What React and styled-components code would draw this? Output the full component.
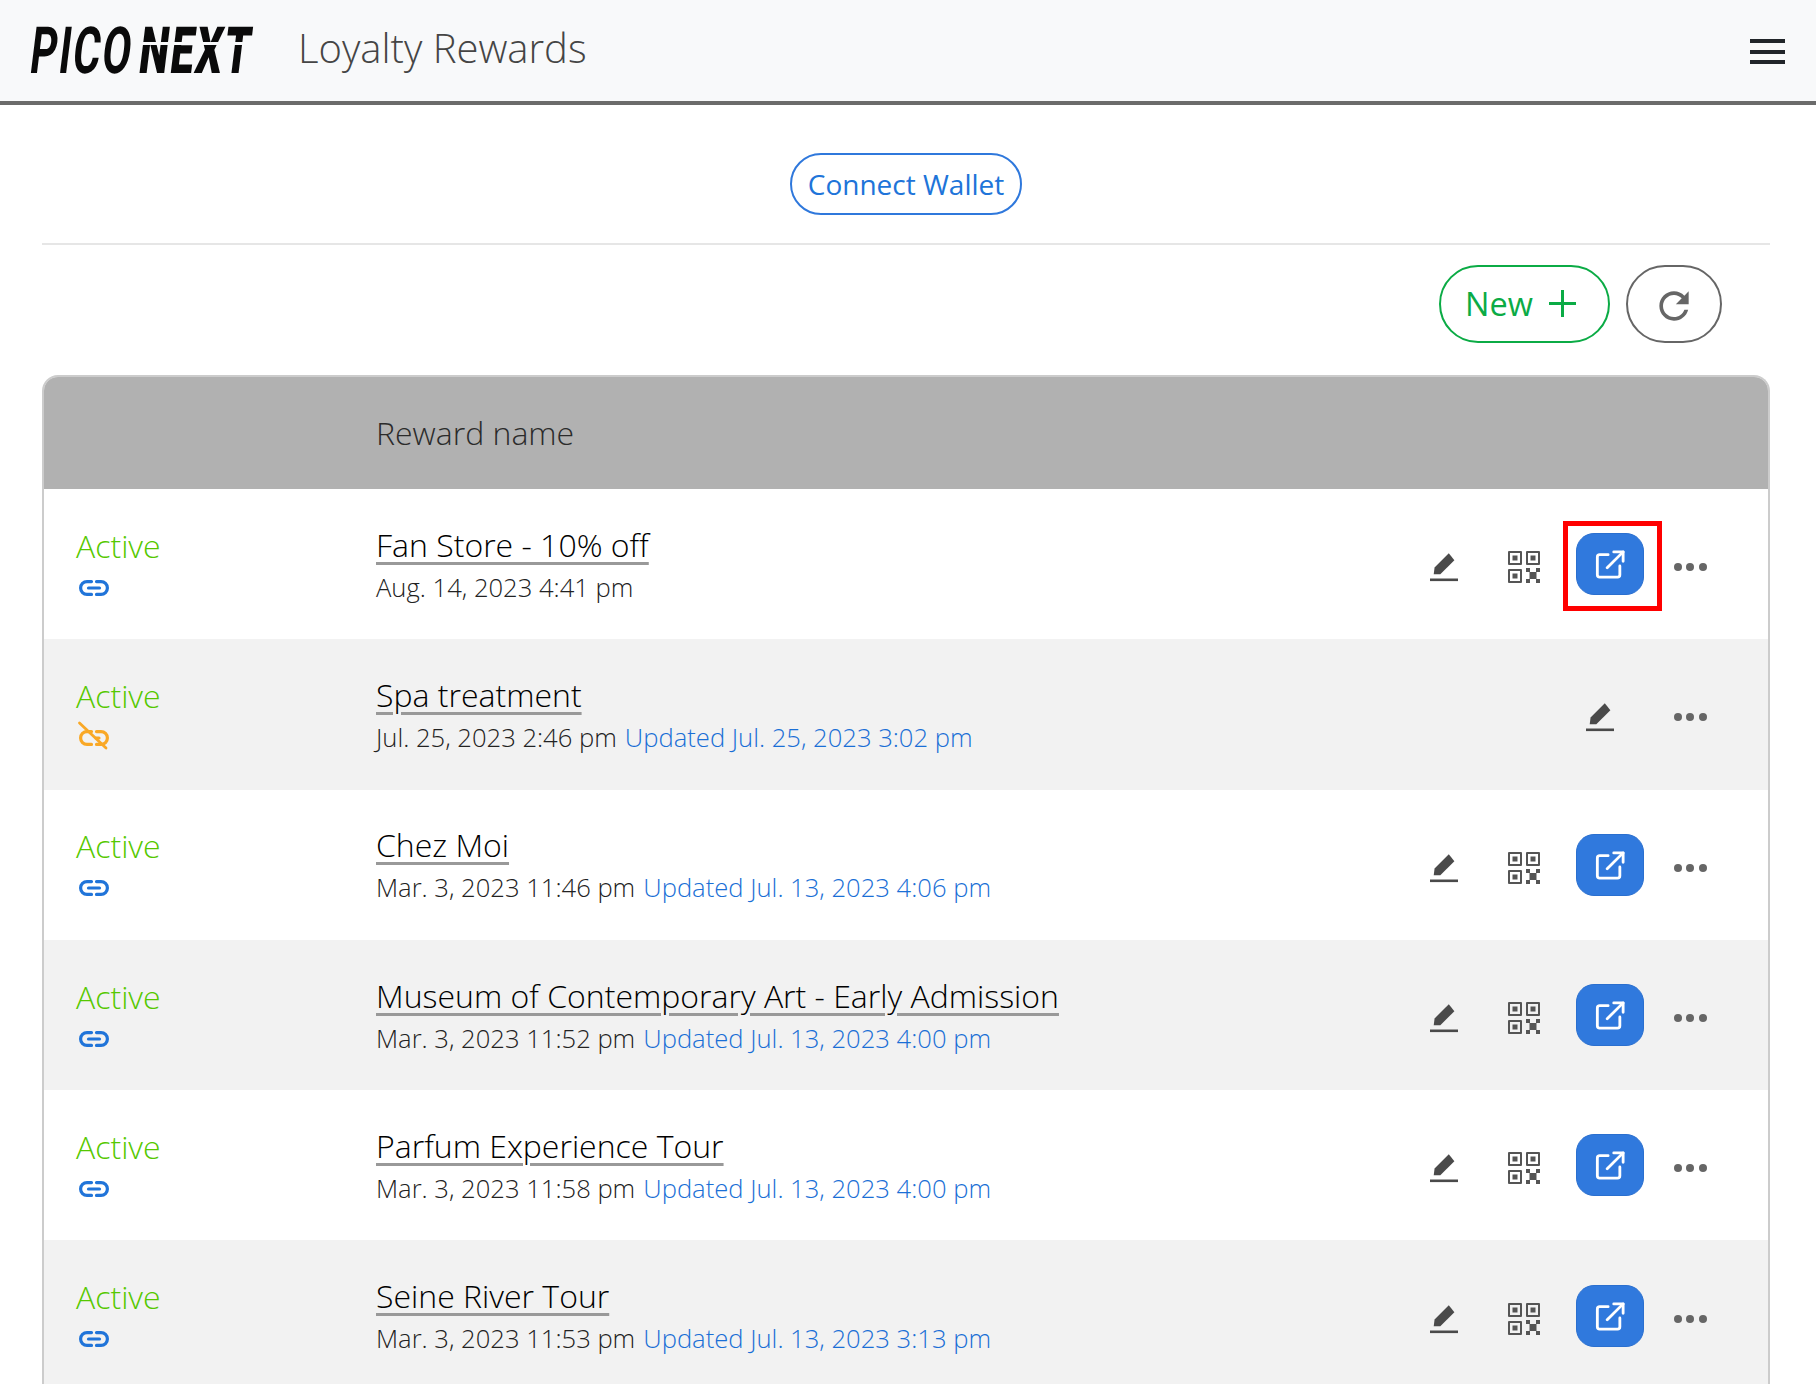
import styled, { createGlobalStyle } from 'styled-components';

const GlobalStyle = createGlobalStyle`
  html, body {
    margin: 0;
    padding: 0;
    background: #fff;
    font-family: "Open Sans", "Liberation Sans", sans-serif;
  }
  #root {
    height: 1384px;
    overflow: hidden;
  }
`;

const Header = styled.header`
  height: 101px;
  box-sizing: content-box;
  border-bottom: 4px solid #6b6b6b;
  background: #f8f9fa;
  display: flex;
  align-items: center;
  padding: 0 31px 0 31px;
`;

const LogoBox = styled.div`
  width: 267px;
  flex: none;
  height: 60px;
  overflow: visible;
`;

const Logo = styled.div`
  display: inline-block;
  font-family: "Roboto", sans-serif;
  font-weight: 700;
  font-size: 65px;
  line-height: 60px;
  letter-spacing: 3px;
  color: #0a0a0a;
  white-space: nowrap;
  transform-origin: left center;
  transform: skewX(-7deg) scaleX(0.64);
`;

const LogoNext = styled.span`
  position: relative;
  margin-left: 10px;
  font-weight: 900;
  &::after {
    content: "";
    position: absolute;
    left: -4px;
    right: -4px;
    top: 29px;
    height: 3px;
    background: #f8f9fa;
  }
`;

const AppTitle = styled.div`
  flex: 1;
  font-size: 40px;
  font-weight: 300;
  color: #454545;
  margin-top: -7px;
`;

const Burger = styled.button`
  width: 35px;
  height: 25px;
  padding: 0;
  border: 0;
  background: none;
  display: flex;
  flex-direction: column;
  justify-content: space-between;
  margin-top: 2px;
  i {
    display: block;
    height: 4px;
    background: #212529;
  }
`;

const Main = styled.main`
  padding: 0 46px 0 42px;
`;

const WalletBar = styled.div`
  display: flex;
  justify-content: center;
  padding: 48px 0 28px;
  border-bottom: 2px solid #e6e6e6;
`;

const WalletButton = styled.button`
  width: 232px;
  height: 62px;
  border: 2px solid #2f78dc;
  border-radius: 31px;
  background: #fff;
  color: #2074d9;
  font: 400 28px "Open Sans", sans-serif;
  padding: 0;
`;

const Toolbar = styled.div`
  display: flex;
  justify-content: flex-end;
  gap: 16px;
  padding: 20px 48px 32px 0;
`;

const PillButton = styled.button`
  height: 78px;
  box-sizing: border-box;
  border: 2px solid ${p => p.$color};
  border-radius: 39px;
  background: #fff;
  color: ${p => p.$color};
  width: ${p => p.$width}px;
  font: 400 32.5px "Open Sans", sans-serif;
  display: flex;
  align-items: center;
  justify-content: center;
  gap: 16px;
  padding: 0 ${p => p.$shift || 0}px 2px 0;
`;

const RefreshGlyph = styled.svg`
  margin-top: 6px;
`;

const Table = styled.section`
  border: solid #ccc;
  border-width: 2px 2px 0;
  border-radius: 16px 16px 0 0;
  overflow: hidden;
`;

const HeadRow = styled.div`
  height: 112px;
  box-sizing: border-box;
  padding: 0 0 2px 332px;
  background: #b1b1b1;
  display: flex;
  align-items: center;
  font-size: 32px;
  font-weight: 300;
  color: #2b2b2b;
`;

const Row = styled.div`
  height: 150.3px;
  box-sizing: border-box;
  display: flex;
  align-items: center;
  background: ${p => (p.$alt ? '#f2f2f2' : '#fff')};
  padding-right: 32px;
`;

const StatusCol = styled.div`
  width: 332px;
  flex: none;
  padding: 0 0 7px 32px;
  box-sizing: border-box;
`;

const StatusText = styled.div`
  font-size: 32px;
  line-height: 40px;
  font-weight: 300;
  color: #56c800;
`;

const LinkIcon = styled.svg`
  display: block;
  margin: 14px 0 0 3px;
  color: ${p => p.$color};
  overflow: visible;
`;

const NameCol = styled.div`
  flex: 1;
  min-width: 0;
  padding-top: 5px;
`;

const RewardName = styled.a`
  display: inline-block;
  font-size: 32px;
  line-height: 40px;
  font-weight: 300;
  color: #000;
  text-decoration: underline;
  text-decoration-color: #999;
  text-decoration-thickness: 2.5px;
  text-underline-offset: 5px;
`;

const Dates = styled.div`
  margin-top: 2px;
  font-size: 25.6px;
  line-height: 42px;
  font-weight: 300;
  color: #222;
  span {
    color: #1a6fd6;
    margin-left: 8px;
  }
`;

const Actions = styled.div`
  display: flex;
  align-items: center;
  flex: none;
`;

const EditSlot = styled.div`
  width: 88px;
  padding-top: 6px;
  display: flex;
  justify-content: center;
  color: #4a4a4a;
`;

const QrSlot = styled.div`
  width: 72px;
  margin-right: 16px;
  padding-top: 6px;
  display: flex;
  justify-content: center;
  color: #555;
`;

const OpenButton = styled.button`
  width: 68px;
  height: 62px;
  border-radius: 18px;
  border: 1px solid #2a6fcf;
  background: #3079dd;
  color: #fff;
  padding: 2px 0 0;
  display: flex;
  align-items: center;
  justify-content: center;
  position: relative;
`;

const Highlight = styled.div`
  position: absolute;
  left: -14px;
  top: -13px;
  width: 99px;
  height: 90px;
  box-sizing: border-box;
  border: 5px solid #f00;
  pointer-events: none;
`;

const MoreSlot = styled.div`
  width: 92px;
  padding-top: 6px;
  display: flex;
  justify-content: center;
  gap: 4.5px;
  i {
    width: 8px;
    height: 8px;
    border-radius: 50%;
    background: #666;
  }
`;

const EditIcon = () => (
  <svg width="30" height="30" viewBox="0 0 30 30" fill="currentColor">
    <path d="M18.6 3 4.4 17.2 3.5 24h6.6L24.2 10z" transform="translate(1.2 -1.8)" />
    <rect x="1" y="26.5" width="28" height="2.6" />
  </svg>
);

const QrIcon = () => (
  <svg width="32" height="32" viewBox="0 0 32 32" fill="currentColor">
    <path fillRule="evenodd" d="M1 0h12a1 1 0 0 1 1 1v12a1 1 0 0 1-1 1H1a1 1 0 0 1-1-1V1a1 1 0 0 1 1-1zm1 2v10h10V2z" />
    <rect x="4.5" y="4.5" width="5" height="5" />
    <path fillRule="evenodd" d="M19 0h12a1 1 0 0 1 1 1v12a1 1 0 0 1-1 1H19a1 1 0 0 1-1-1V1a1 1 0 0 1 1-1zm1 2v10h10V2z" />
    <rect x="22.5" y="4.5" width="5" height="5" />
    <path fillRule="evenodd" d="M1 18h12a1 1 0 0 1 1 1v12a1 1 0 0 1-1 1H1a1 1 0 0 1-1-1V19a1 1 0 0 1 1-1zm1 2v10h10V20z" />
    <rect x="4.5" y="22.5" width="5" height="5" />
    <rect x="18" y="17" width="4" height="4" />
    <rect x="28" y="17" width="4" height="4" />
    <rect x="21.5" y="21" width="7" height="7" />
    <rect x="18" y="28" width="4" height="4" />
    <rect x="28" y="28" width="4" height="4" />
  </svg>
);

const OpenIcon = () => (
  <svg width="30" height="30" viewBox="0 0 32 32" fill="none" stroke="currentColor" strokeWidth="3" strokeLinecap="round" strokeLinejoin="round">
    <path d="M14 6H5a2.5 2.5 0 0 0-2.5 2.5v19A2.5 2.5 0 0 0 5 30h19a2.5 2.5 0 0 0 2.5-2.5V18" transform="translate(0 -1)" />
    <path d="M13 19 30 2" />
    <path d="M20 2h10v10" />
  </svg>
);

const RefreshIcon = () => (
  <RefreshGlyph width="44" height="44" viewBox="0 0 24 24" fill="#666">
    <path d="M17.65 6.35C16.2 4.9 14.21 4 12 4c-4.42 0-7.99 3.58-7.99 8s3.57 8 7.99 8c3.73 0 6.84-2.55 7.73-6h-2.08c-.82 2.33-3.04 4-5.65 4-3.31 0-6-2.69-6-6s2.69-6 6-6c1.66 0 3.14.69 4.22 1.78L13 11h7V4l-2.35 2.35z" />
  </RefreshGlyph>
);

const PlusIcon = () => (
  <svg width="27" height="27" viewBox="0 0 27 27" stroke="#0bab45" strokeWidth="3">
    <path d="M13.5 0v27M0 13.5h27" />
  </svg>
);

// chain icon, the off version gets a slash and a gap in the middle bar
const ChainIcon = ({ off }) => (
  <LinkIcon $color={off ? '#f9a826' : '#2074d9'} width="30" height="16" viewBox="0 0 30 16" fill="none" stroke="currentColor" strokeWidth="3.2" strokeLinecap="round">
    <path d="M12.5 1.6H8a6.4 6.4 0 0 0 0 12.8h4.5" />
    <path d="M17.5 1.6H22a6.4 6.4 0 0 1 0 12.8h-4.5" />
    {off ? <path d="M17 8h3" /> : <path d="M9.5 8h11" />}
    {off && <path d="M0.5 -7 27 18" strokeWidth="2.8" />}
  </LinkIcon>
);

const rewards = [
  { name: 'Fan Store - 10% off', created: 'Aug. 14, 2023 4:41 pm', highlight: true },
  { name: 'Spa treatment', created: 'Jul. 25, 2023 2:46 pm', updated: 'Updated Jul. 25, 2023 3:02 pm', inactive: true },
  { name: 'Chez Moi', created: 'Mar. 3, 2023 11:46 pm', updated: 'Updated Jul. 13, 2023 4:06 pm' },
  { name: 'Museum of Contemporary Art - Early Admission', created: 'Mar. 3, 2023 11:52 pm', updated: 'Updated Jul. 13, 2023 4:00 pm' },
  { name: 'Parfum Experience Tour', created: 'Mar. 3, 2023 11:58 pm', updated: 'Updated Jul. 13, 2023 4:00 pm' },
  { name: 'Seine River Tour', created: 'Mar. 3, 2023 11:53 pm', updated: 'Updated Jul. 13, 2023 3:13 pm' },
];

const RewardRow = ({ reward, alt }) => (
  <Row $alt={alt}>
    <StatusCol>
      <StatusText>Active</StatusText>
      <ChainIcon off={reward.inactive} />
    </StatusCol>
    <NameCol>
      <RewardName>{reward.name}</RewardName>
      <Dates>
        {reward.created}
        {reward.updated && <span>{reward.updated}</span>}
      </Dates>
    </NameCol>
    <Actions>
      <EditSlot><EditIcon /></EditSlot>
      {!reward.inactive && <QrSlot><QrIcon /></QrSlot>}
      {!reward.inactive && (
        <OpenButton>
          <OpenIcon />
          {reward.highlight && <Highlight />}
        </OpenButton>
      )}
      <MoreSlot><i /><i /><i /></MoreSlot>
    </Actions>
  </Row>
);

export default function App() {
  return (
    <>
      <GlobalStyle />
      <Header>
        <LogoBox><Logo>PICO<LogoNext>NEXT</LogoNext></Logo></LogoBox>
        <AppTitle>Loyalty Rewards</AppTitle>
        <Burger><i /><i /><i /></Burger>
      </Header>
      <Main>
        <WalletBar>
          <WalletButton>Connect Wallet</WalletButton>
        </WalletBar>
        <Toolbar>
          <PillButton $color="#0bab45" $width={171} $shift={8}>New <PlusIcon /></PillButton>
          <PillButton $color="#666" $width={96}><RefreshIcon /></PillButton>
        </Toolbar>
        <Table>
          <HeadRow>Reward name</HeadRow>
          {rewards.map((reward, i) => (
            <RewardRow key={reward.name} reward={reward} alt={i % 2 === 1} />
          ))}
        </Table>
      </Main>
    </>
  );
}
